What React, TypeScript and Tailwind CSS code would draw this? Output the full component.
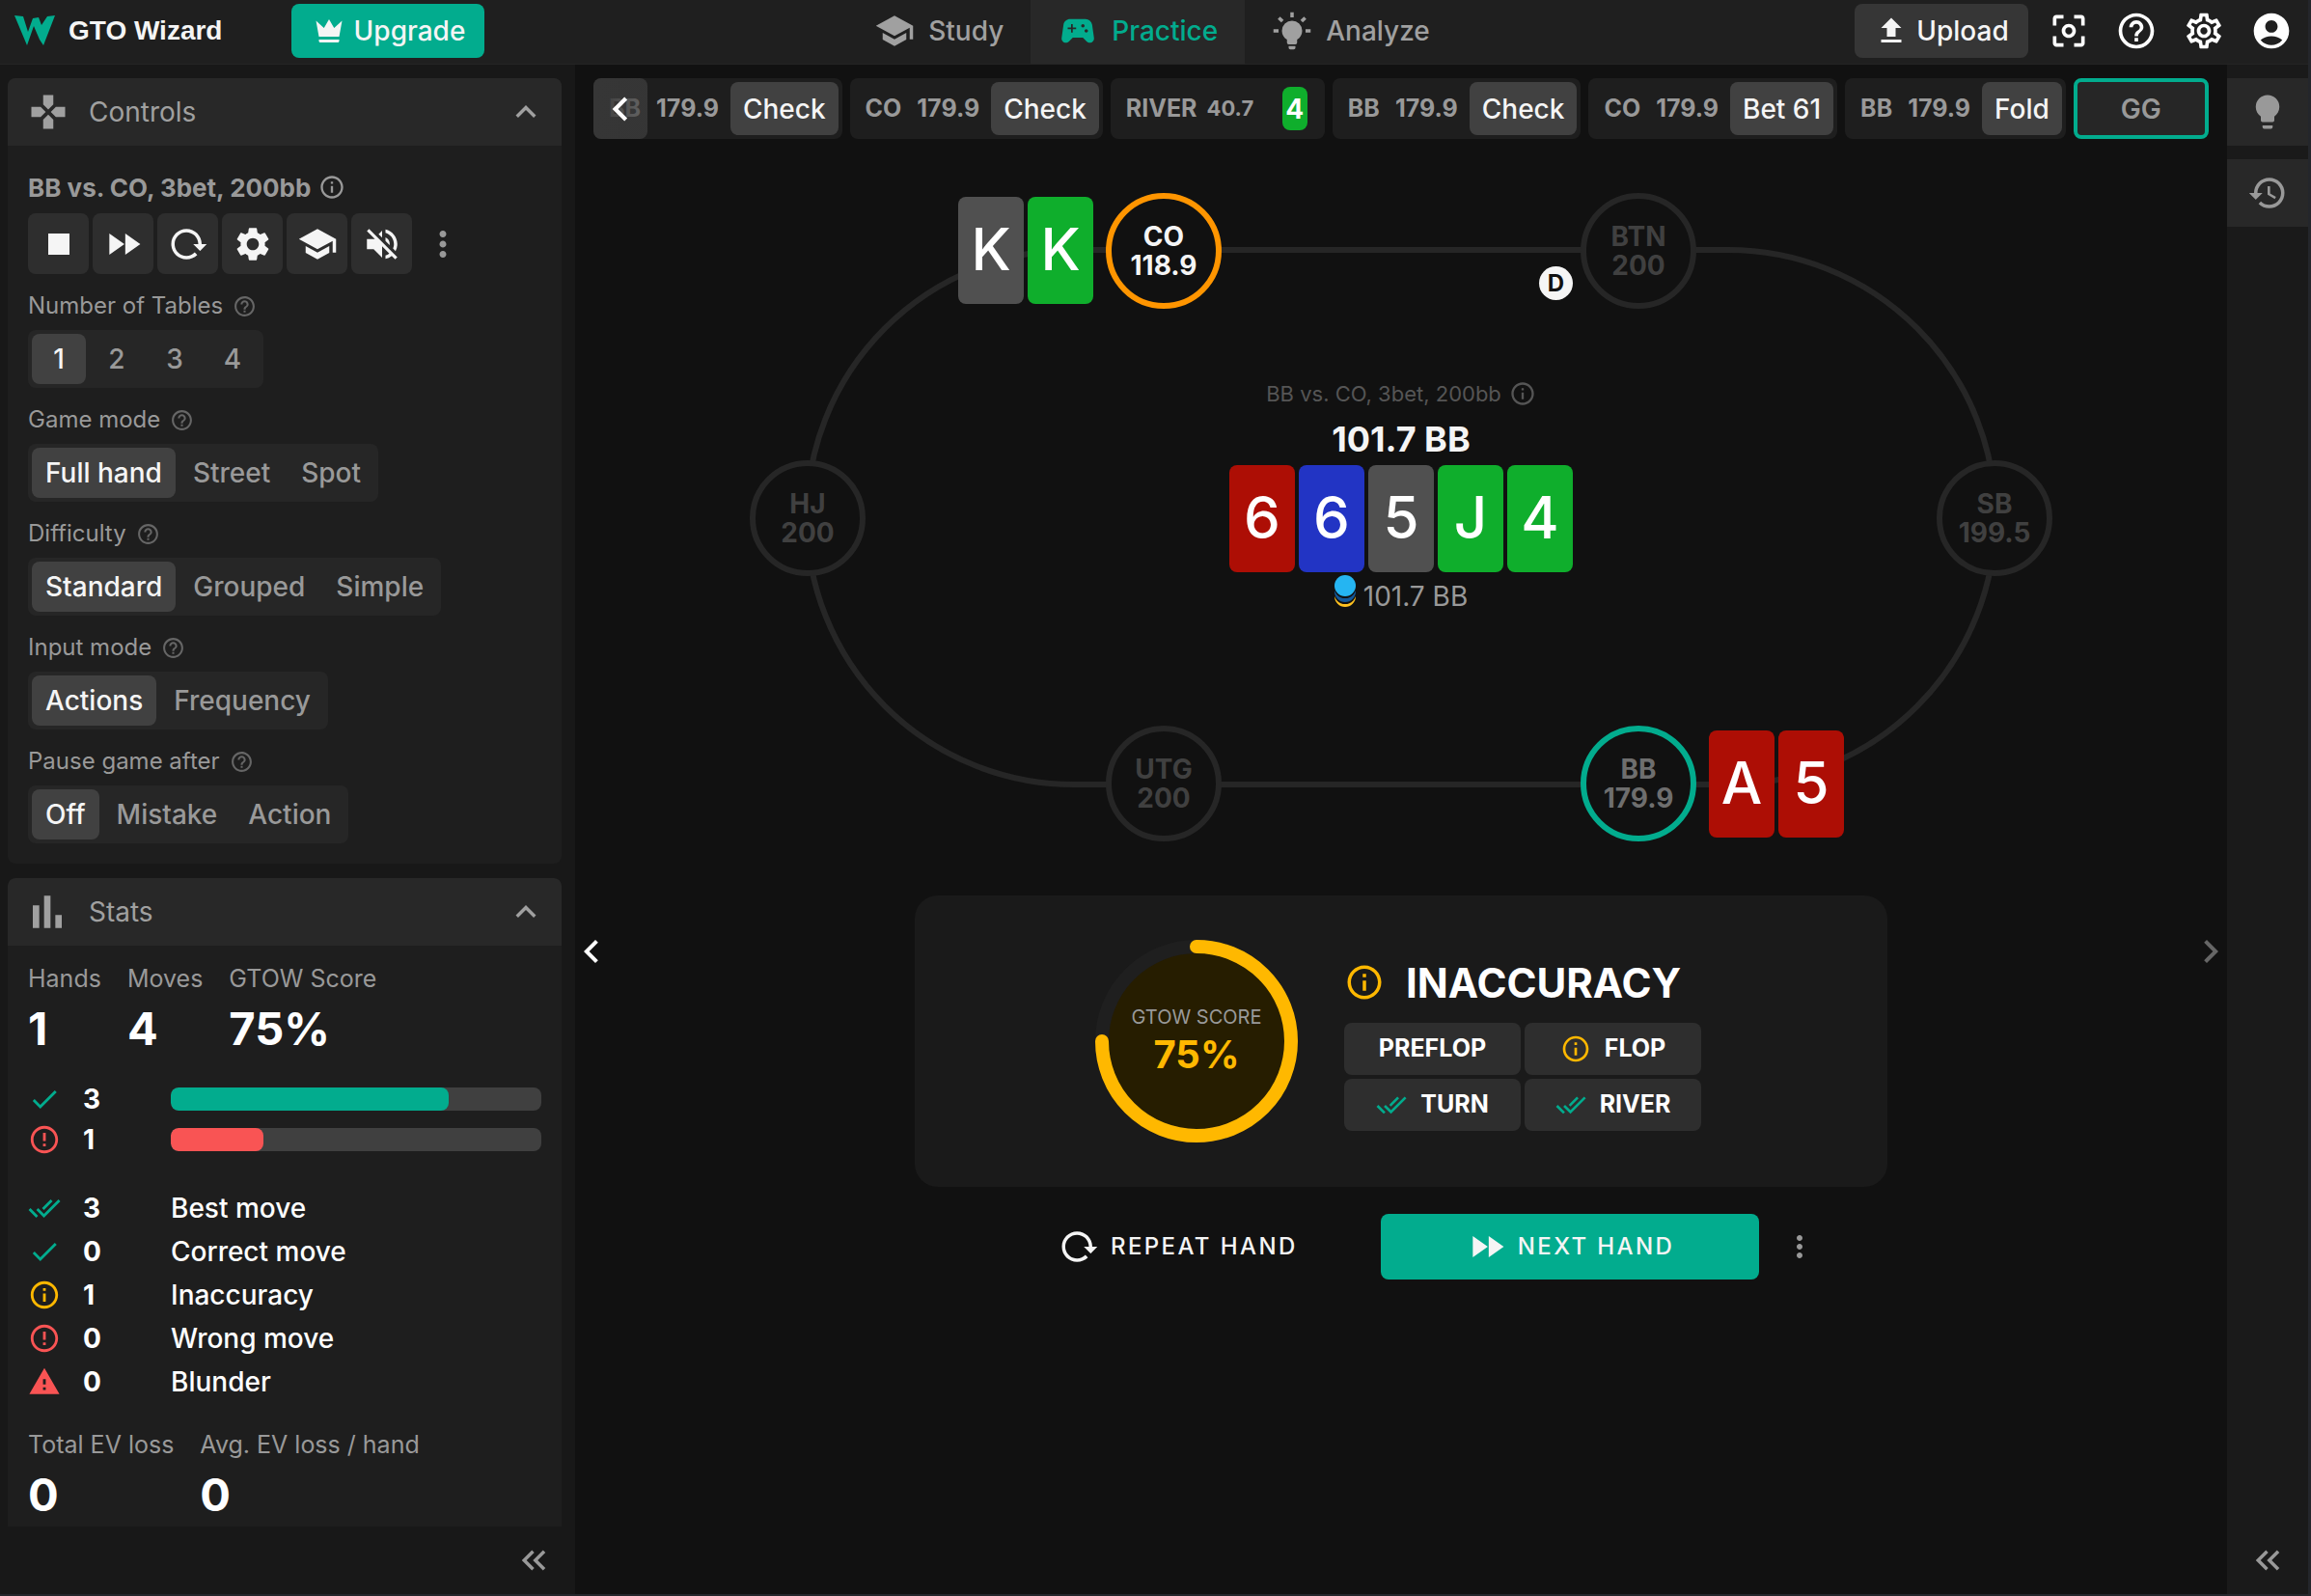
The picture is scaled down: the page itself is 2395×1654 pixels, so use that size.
import React from 'react';
import {
  MdAccountCircle,
  MdCenterFocusWeak,
  MdCheck,
  MdChevronLeft,
  MdChevronRight,
  MdDoneAll,
  MdErrorOutline,
  MdFastForward,
  MdGamepad,
  MdHelpOutline,
  MdHistory,
  MdInfoOutline,
  MdKeyboardArrowUp,
  MdKeyboardDoubleArrowLeft,
  MdMoreVert,
  MdOutlineSettings,
  MdSchool,
  MdSettings,
  MdSportsEsports,
  MdStop,
  MdUpload,
  MdVolumeOff,
  MdWarning,
} from 'react-icons/md';

type IconProps = { size?: number; className?: string };

const glyph = (d: string) => ({ size = 24, className }: IconProps) => (
  <svg viewBox="0 0 24 24" width={size} height={size} fill="currentColor" className={className} aria-hidden="true">
    <path d={d} />
  </svg>
);

const ReloadIcon = glyph('M2 12C2 16.97 6.03 21 11 21C13.39 21 15.68 20.06 17.4 18.4L15.9 16.9C14.63 18.25 12.86 19 11 19C4.76 19 1.64 11.46 6.05 7.05C10.46 2.64 18 5.77 18 12H15L19 16H19.1L23 12H20C20 7.03 15.97 3 11 3C6.03 3 2 7.03 2 12Z');
const PollIcon = glyph('M3 22V8H7V22H3M10 22V2H14V22H10M17 22V14H21V22H17Z');
const CrownIcon = glyph('M5 16L3 5L8.5 10L12 4L15.5 10L21 5L19 16H5M19 19C19 19.6 18.6 20 18 20H6C5.4 20 5 19.6 5 19V18H19V19Z');
const BulbIcon = glyph('M12 2A7 7 0 0 0 5 9C5 11.38 6.19 13.47 8 14.74V17A1 1 0 0 0 9 18H15A1 1 0 0 0 16 17V14.74C17.81 13.47 19 11.38 19 9A7 7 0 0 0 12 2M9 21A1 1 0 0 0 10 22H14A1 1 0 0 0 15 21V20H9V21Z');
const BulbOnIcon = glyph('M12 6A6 6 0 0 1 18 12C18 14.22 16.79 16.16 15 17.2V19A1 1 0 0 1 14 20H10A1 1 0 0 1 9 19V17.2C7.21 16.16 6 14.22 6 12A6 6 0 0 1 12 6M14 21V22A1 1 0 0 1 13 23H11A1 1 0 0 1 10 22V21H14M20 11H23V13H20V11M1 11H4V13H1V11M13 1V4H11V1H13M4.92 3.5L7.05 5.64L5.63 7.05L3.5 4.93L4.92 3.5M16.95 5.63L19.07 3.5L20.5 4.93L18.37 7.05L16.95 5.63Z');

const toolbar = [
  { label: 'Stop', icon: <MdStop size={44} /> },
  { label: 'Next hand', icon: <MdFastForward size={44} /> },
  { label: 'Repeat hand', icon: <ReloadIcon size={42} /> },
  { label: 'Settings', icon: <MdSettings size={42} /> },
  { label: 'Study', icon: <MdSchool size={42} /> },
  { label: 'Mute', icon: <MdVolumeOff size={42} /> },
];

const options = [
  { label: 'Number of Tables', values: ['1', '2', '3', '4'] },
  { label: 'Game mode', values: ['Full hand', 'Street', 'Spot'] },
  { label: 'Difficulty', values: ['Standard', 'Grouped', 'Simple'] },
  { label: 'Input mode', values: ['Actions', 'Frequency'] },
  { label: 'Pause game after', values: ['Off', 'Mistake', 'Action'] },
];

const bars = [
  { label: 'Correct', count: 3, percent: 75, color: 'bg-[#02ac8e]', icon: <MdCheck size={34} className="text-[#02ac8e]" /> },
  { label: 'Wrong', count: 1, percent: 25, color: 'bg-[#f95454]', icon: <MdErrorOutline size={34} className="text-[#f95454]" /> },
];

const moves = [
  { label: 'Best move', count: 3, icon: <MdDoneAll size={34} className="text-[#02ac8e]" /> },
  { label: 'Correct move', count: 0, icon: <MdCheck size={34} className="text-[#02ac8e]" /> },
  { label: 'Inaccuracy', count: 1, icon: <MdInfoOutline size={34} className="text-[#ffb800]" /> },
  { label: 'Wrong move', count: 0, icon: <MdErrorOutline size={34} className="text-[#f95454]" /> },
  { label: 'Blunder', count: 0, icon: <MdWarning size={34} className="text-[#f95454]" /> },
];

const suits = {
  red: 'bg-[#ad0e05]',
  blue: 'bg-[#2234c4]',
  gray: 'bg-[#505050]',
  green: 'bg-[#0fae2c]',
};

const PlayingCard: React.FC<{ rank: string; suit: keyof typeof suits }> = ({ rank, suit }) => (
  <span className={`flex h-[111px] w-[68px] items-center justify-center rounded-lg pb-1 text-[60px] font-medium text-white ${suits[suit]}`}>
    {rank}
  </span>
);

const Seat: React.FC<{ name: string; stack: string; place: string; look?: string }> = ({
  name,
  stack,
  place,
  look = 'border-[#262626] text-[#404040]',
}) => (
  <div className={`absolute flex h-[120px] w-[120px] flex-col items-center justify-center rounded-full border-[6px] bg-[#111111] text-[28px] leading-[30px] font-bold ${look} ${place}`}>
    <span>{name}</span>
    <span>{stack}</span>
  </div>
);

const NavTab: React.FC<{ label: string; icon: React.ReactNode; active?: boolean }> = ({ label, icon, active }) => (
  <a
    href="#"
    className={`flex items-center gap-3.5 px-7 pb-0.5 text-[28px] font-medium ${active ? 'bg-[#282828] text-[#02ac8e]' : 'text-[#a0a0a0]'}`}
  >
    {icon}
    {label}
  </a>
);

const Header: React.FC = () => (
  <header className="grid h-[67px] shrink-0 grid-cols-[1fr_auto_1fr] border-b border-[#242424] bg-[#1f1f1f] pr-1">
    <div className="flex items-center pb-0.5 pl-[15px]">
      <svg viewBox="0 0 42 32" width="42" height="32" fill="#02ac8e" aria-hidden="true">
        <path d="M0 0 L9 1 L14 17 L19 3 L25 2 L28 10 L34 1 L42 0 L30 31 L26 25 L20 11 L13 31 Z" />
      </svg>
      <span className="ml-3.5 font-['Liberation_Sans',sans-serif] text-[28px] font-bold text-[#f5f5f5]">GTO Wizard</span>
      <button className="ml-[72px] flex h-14 w-[200px] items-center justify-center gap-2 rounded-lg bg-[#02ac8e] text-[28px] font-medium text-[#f5f5f5]">
        <CrownIcon size={36} />
        Upgrade
      </button>
    </div>
    <nav className="flex">
      <NavTab label="Study" icon={<MdSchool size={42} />} />
      <NavTab label="Practice" icon={<MdSportsEsports size={42} />} active />
      <NavTab label="Analyze" icon={<BulbOnIcon size={42} />} />
    </nav>
    <div className="flex items-center justify-end pr-3 pb-0.5 text-white">
      <button className="mr-5 flex h-14 w-[180px] items-center justify-center gap-2 rounded-lg bg-[#363636] text-[28px] font-medium text-[#f5f5f5]">
        <MdUpload size={36} />
        Upload
      </button>
      <div className="flex gap-[26px]">
        <button aria-label="Focus"><MdCenterFocusWeak size={44} /></button>
        <button aria-label="Help"><MdHelpOutline size={44} /></button>
        <button aria-label="Settings"><MdOutlineSettings size={44} /></button>
        <button aria-label="Account"><MdAccountCircle size={44} /></button>
      </div>
    </div>
  </header>
);

const PanelHeader: React.FC<{ title: string; icon: React.ReactNode }> = ({ title, icon }) => (
  <button className="flex h-[70px] w-full shrink-0 items-center rounded-t-lg bg-[#282828] px-5 text-[28px] text-[#a0a0a0]">
    <span className="w-16 pl-px">{icon}</span>
    {title}
    <MdKeyboardArrowUp size={42} className="-mr-1 ml-auto" />
  </button>
);

const Controls: React.FC = () => (
  <section className="rounded-lg bg-[#1e1e1e]">
    <PanelHeader title="Controls" icon={<MdGamepad size={42} />} />
    <div className="px-[21px] pt-[25px] pb-[21px] text-[#999999]">
      <h2 className="flex h-9 items-center gap-2 text-[26px] font-bold">
        BB vs. CO, 3bet, 200bb <MdInfoOutline size={28} />
      </h2>
      <div className="mt-[9px] flex items-center gap-1">
        {toolbar.map((item) => (
          <button key={item.label} aria-label={item.label} className="flex h-[63px] w-[63px] items-center justify-center rounded-lg bg-[#2e2e2e] text-[#f5f5f5]">
            {item.icon}
          </button>
        ))}
        <button aria-label="More" className="ml-[7px]"><MdMoreVert size={42} /></button>
      </div>
      {options.map((option) => (
        <div key={option.label} className="flex flex-col items-start">
          <div className="mt-[15px] mb-[7px] flex h-9 items-center gap-2.5 text-[24px]">
            {option.label} <MdHelpOutline size={25} className="text-[#666666]" />
          </div>
          <div role="group" aria-label={option.label} className="flex gap-1 rounded-lg bg-[#262626] p-1">
            {option.values.map((value, idx) => (
              <button
                key={value}
                aria-pressed={idx === 0}
                className={`h-[52px] min-w-14 rounded-lg px-3.5 text-[28px] font-medium ${idx === 0 ? 'bg-[#414141] text-[#f5f5f5]' : ''}`}
              >
                {value}
              </button>
            ))}
          </div>
        </div>
      ))}
    </div>
  </section>
);

const Figure: React.FC<{ label: string; value: string }> = ({ label, value }) => (
  <div>
    <div className="h-9 text-[25px] leading-9 text-[#999999]">{label}</div>
    <div className="h-[68px] text-[47px] leading-[68px] font-bold text-white">{value}</div>
  </div>
);

const Stats: React.FC = () => (
  <section className="min-h-0 flex-1 overflow-hidden rounded-t-lg bg-[#1e1e1e]">
    <PanelHeader title="Stats" icon={<PollIcon size={40} />} />
    <div className="px-[21px] pt-4">
      <div className="flex gap-[27px]">
        <Figure label="Hands" value="1" />
        <Figure label="Moves" value="4" />
        <Figure label="GTOW Score" value="75%" />
      </div>
      <div className="mt-[18px] text-[28px] font-medium text-white">
        {bars.map((bar) => (
          <div key={bar.label} className="flex h-[42px] items-center">
            <span className="w-[57px]">{bar.icon}</span>
            <span className="w-[91px] font-bold">{bar.count}</span>
            <div role="img" aria-label={bar.label} className="h-6 flex-1 overflow-hidden rounded-lg bg-[#404040]">
              <div className={`h-full rounded-lg ${bar.color}`} style={{ width: `${bar.percent}%` }} />
            </div>
          </div>
        ))}
        <div className="mt-[27px]">
          {moves.map((move) => (
            <div key={move.label} className="flex h-[45px] items-center">
              <span className="w-[57px]">{move.icon}</span>
              <span className="w-[91px] font-bold">{move.count}</span>
              {move.label}
            </div>
          ))}
        </div>
      </div>
      <div className="mt-[25px] flex gap-[27px]">
        <Figure label="Total EV loss" value="0" />
        <Figure label="Avg. EV loss / hand" value="0" />
      </div>
    </div>
  </section>
);

const HistoryItem: React.FC<{ seat: string; action: string }> = ({ seat, action }) => (
  <div className="flex shrink-0 items-center rounded-lg bg-[#1e1e1e] py-1 pr-1 pl-4 text-[25px] font-bold text-[#999999]">
    <span>{seat}</span>
    <span className="mr-3 ml-4">179.9</span>
    <button className="h-[55px] rounded-lg bg-[#414141] px-[13px] text-[28px] font-medium text-[#f5f5f5]">{action}</button>
  </div>
);

const HandHistory: React.FC = () => (
  <div className="relative ml-[19px] flex h-[63px] shrink-0 gap-2">
    <HistoryItem seat="BB" action="Check" />
    <HistoryItem seat="CO" action="Check" />
    <div className="flex w-[222px] shrink-0 items-center rounded-lg bg-[#1e1e1e] pr-[18px] pl-4 text-[25px] font-bold text-[#999999]">
      RIVER
      <span className="ml-2.5 text-[22px]">40.7</span>
      <span className="ml-auto flex h-[45px] w-[26px] items-center justify-center rounded-lg bg-[#0fae2c] text-[28px] text-white">4</span>
    </div>
    <HistoryItem seat="BB" action="Check" />
    <HistoryItem seat="CO" action="Bet 61" />
    <HistoryItem seat="BB" action="Fold" />
    <button className="w-[140px] shrink-0 rounded-lg border-4 border-[#02ac8e] bg-[#262626] text-[28px] font-semibold text-[#999999]">GG</button>
    <button aria-label="Previous actions" className="absolute top-0 left-0 flex h-full w-14 items-center justify-center rounded-lg bg-linear-to-r from-[#363636] to-[#454545]/60 text-white">
      <MdChevronLeft size={50} />
    </button>
  </div>
);

const Table: React.FC = () => (
  <div className="relative mx-auto mt-28 flex h-[560px] w-[1238px] shrink-0 flex-col items-center rounded-full border-[6px] border-[#262626] pt-[132px]">
    <div className="flex h-7 items-center gap-2 text-[22px] text-[#555555]">
      BB vs. CO, 3bet, 200bb <MdInfoOutline size={28} />
    </div>
    <div className="mt-2 h-[52px] text-[36px] leading-[50px] font-bold text-[#f5f5f5]">101.7 BB</div>
    <div className="flex gap-1">
      <PlayingCard rank="6" suit="red" />
      <PlayingCard rank="6" suit="blue" />
      <PlayingCard rank="5" suit="gray" />
      <PlayingCard rank="J" suit="green" />
      <PlayingCard rank="4" suit="green" />
    </div>
    <div className="mt-0.5 flex items-start gap-2 text-[28px] text-[#999999]">
      <svg viewBox="0 0 22 34" width="22" height="34" aria-hidden="true">
        <circle cx="11" cy="23" r="11" fill="#ffc220" />
        <circle cx="11" cy="19.5" r="11.5" fill="#111111" />
        <circle cx="11" cy="18" r="11" fill="#12589a" />
        <circle cx="11" cy="13.5" r="11.5" fill="#111111" />
        <circle cx="11" cy="12" r="11" fill="#25b5f2" />
      </svg>
      <span className="mt-[3px] leading-10">101.7 BB</span>
    </div>

    <Seat name="CO" stack="118.9" place="-top-[62px] left-[307px]" look="border-[#ff9500] bg-[#1e1e1e] text-[#f5f5f5]" />
    <Seat name="BTN" stack="200" place="-top-[62px] right-[307px]" />
    <Seat name="HJ" stack="200" place="top-[215px] -left-[62px]" />
    <Seat name="SB" stack="199.5" place="top-[215px] -right-[62px]" />
    <Seat name="UTG" stack="200" place="-bottom-[62px] left-[307px]" />
    <Seat name="BB" stack="179.9" place="-bottom-[62px] right-[307px]" look="border-[#02ac8e] text-[#6e6e6e]" />

    <div className="absolute -top-[58px] left-[154px] flex gap-1">
      <PlayingCard rank="K" suit="gray" />
      <PlayingCard rank="K" suit="green" />
    </div>
    <div className="absolute right-[154px] -bottom-[58px] flex gap-1">
      <PlayingCard rank="A" suit="red" />
      <PlayingCard rank="5" suit="red" />
    </div>
    <span className="absolute top-[14px] right-[435px] flex h-[35px] w-[35px] items-center justify-center rounded-full bg-[#f5f5f5] text-[24px] font-bold text-[#111111]">D</span>
  </div>
);

const ScoreRing: React.FC = () => (
  <div className="relative flex h-[210px] w-[210px] flex-col items-center justify-center">
    <svg viewBox="0 0 210 210" className="absolute inset-0" fill="none" strokeWidth="14" aria-hidden="true">
      <circle cx="105" cy="105" r="98" fill="#261d00" stroke="#1f1f1f" />
      <path d="M105 7 A98 98 0 1 1 7 105" stroke="#ffb800" strokeLinecap="round" />
    </svg>
    <span className="relative text-[20px] leading-7 text-[#999999]">GTOW SCORE</span>
    <span className="relative text-[40px] leading-[50px] font-bold text-[#ffb800]">75%</span>
  </div>
);

const Street: React.FC<{ name: string; icon?: React.ReactNode }> = ({ name, icon }) => (
  <button className="flex h-[54px] w-[183px] items-center justify-center gap-3.5 rounded-lg bg-[#2e2e2e] text-[25px] font-bold text-white">
    {icon}
    {name}
  </button>
);

const Result: React.FC = () => (
  <div className="mx-auto mt-28 w-full max-w-[1008px] shrink-0">
    <div className="flex h-[302px] items-center justify-center gap-12 rounded-3xl bg-[#1a1a1a] pr-1.5">
      <ScoreRing />
      <div className="pt-0.5">
        <h1 className="flex h-[60px] items-center gap-[22px] text-[42px] font-bold text-white">
          <MdInfoOutline size={42} className="text-[#ffb800]" />
          INACCURACY
        </h1>
        <div className="mt-3 grid grid-cols-[auto_auto] gap-1">
          <Street name="PREFLOP" />
          <Street name="FLOP" icon={<MdInfoOutline size={32} className="text-[#ffb800]" />} />
          <Street name="TURN" icon={<MdDoneAll size={32} className="text-[#02ac8e]" />} />
          <Street name="RIVER" icon={<MdDoneAll size={32} className="text-[#02ac8e]" />} />
        </div>
      </div>
    </div>
    <div className="mt-7 flex items-center pl-[149px] text-[24px] font-medium text-[#f5f5f5]">
      <button className="flex w-[334px] items-center gap-3 tracking-widest">
        <ReloadIcon size={42} />
        REPEAT HAND
      </button>
      <button className="flex h-[68px] w-[392px] items-center justify-center gap-2.5 rounded-lg bg-[#02ac8e] tracking-widest">
        <MdFastForward size={44} />
        NEXT HAND
      </button>
      <button aria-label="More options" className="ml-6 text-[#999999]"><MdMoreVert size={36} /></button>
    </div>
  </div>
);

export default function App() {
  return (
    <div className="flex h-screen flex-col border-r-3 border-b-2 border-[#24262b] bg-[#111111] font-[Inter,'Liberation_Sans',sans-serif]">
      <Header />
      <div className="flex min-h-0 flex-1">
        <aside className="flex w-[596px] shrink-0 flex-col bg-[#181818] pt-3.5 pr-3.5 pl-2">
          <div className="flex min-h-0 flex-1 flex-col gap-[15px]">
            <Controls />
            <Stats />
          </div>
          <button aria-label="Collapse sidebar" className="flex h-[70px] shrink-0 items-center justify-end pr-2 text-[#999999]">
            <MdKeyboardDoubleArrowLeft size={42} />
          </button>
        </aside>
        <main className="relative flex min-w-0 flex-1 flex-col pt-3.5">
          <HandHistory />
          <Table />
          <Result />
          <button aria-label="Previous hand" className="absolute top-[58%] -left-[7px] -translate-y-1/2 text-white"><MdChevronLeft size={48} /></button>
          <button aria-label="Following hand" className="absolute top-[58%] -right-[7px] -translate-y-1/2 text-[#666666]"><MdChevronRight size={48} /></button>
        </main>
        <aside className="flex w-[84px] shrink-0 flex-col gap-3.5 bg-[#1a1a1a] pt-3.5 text-[#999999]">
          <button aria-label="Hints" className="flex h-[70px] items-center justify-center bg-[#282828]"><BulbIcon size={42} /></button>
          <button aria-label="History" className="flex h-[70px] items-center justify-center bg-[#282828]"><MdHistory size={42} /></button>
          <button aria-label="Expand panel" className="mt-auto flex h-[70px] items-center justify-center"><MdKeyboardDoubleArrowLeft size={42} /></button>
        </aside>
      </div>
    </div>
  );
}
